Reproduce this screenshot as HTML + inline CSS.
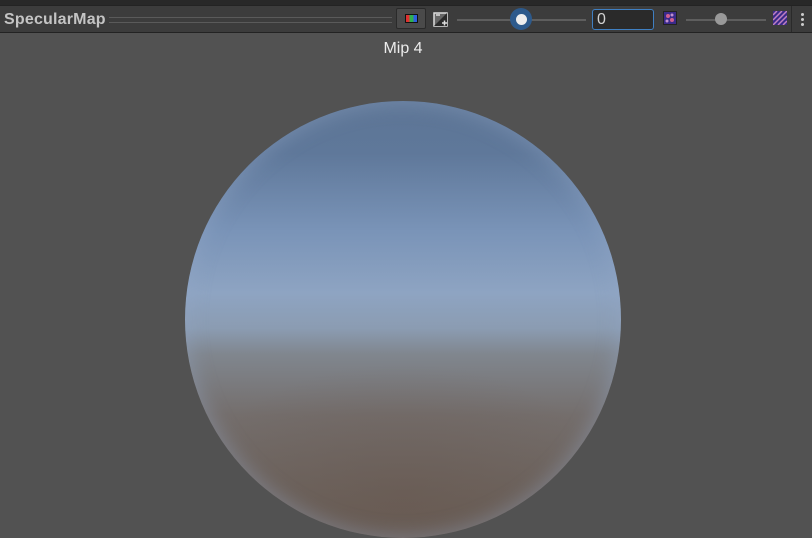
<!DOCTYPE html>
<html><head><style>
html,body{margin:0;padding:0;width:812px;height:538px;overflow:hidden;background:#525252;font-family:"Liberation Sans",sans-serif;}
.top{position:absolute;left:0;top:0;width:812px;height:5px;background:#282828;}
.bar{position:absolute;left:0;top:5px;width:812px;height:26px;background:#3c3c3c;border-top:1px solid #232323;border-bottom:1px solid #232323;}
.title{position:absolute;left:4px;top:5px;color:#c4c4c4;font-size:16px;font-weight:bold;letter-spacing:0.2px;}
.lines{position:absolute;left:109px;top:11px;width:283px;height:4px;border-top:1px solid #5a5a5a;border-bottom:1px solid #5a5a5a;}
.btn{position:absolute;left:396px;top:2px;width:28px;height:19px;background:#4a4a4a;border:1px solid #2a2a2a;border-radius:2px;}
.track{position:absolute;height:2px;background:#5e5e5e;}
.field{position:absolute;left:592px;top:3px;width:62px;height:21px;background:#2a2a2a;border:1px solid #3f7fc2;border-radius:3px;color:#d2d2d2;font-size:16px;line-height:20px;padding-left:4px;box-sizing:border-box;}
.mip{position:absolute;left:0;width:806px;top:40px;text-align:center;color:#ececec;font-size:16px;}
.sphere{position:absolute;left:185px;top:101px;width:436px;height:437px;border-radius:50%;
background:linear-gradient(#5d7595 0%,#5f789a 12%,#7a94b8 30%,#8ea4c2 44%,#8b9cb2 52%,#80868e 58%,#746e6c 72%,#695e56 100%);overflow:hidden;}
.sphere:before{content:"";position:absolute;inset:0;border-radius:50%;background:radial-gradient(ellipse 50% 30% at 50% 90%,rgba(100,80,70,.35),rgba(100,80,70,0));}
.sphere:after{content:"";position:absolute;inset:0;border-radius:50%;box-shadow:inset 0 0 18px 4px rgba(150,170,200,.35);}
</style></head><body>
<div class="top"></div>
<div class="bar">
<div class="title">SpecularMap</div>
<div class="lines"></div>
<div class="btn"><div style="position:absolute;left:8px;top:5px;width:11px;height:7px;border:1px solid #111;background:linear-gradient(90deg,#e03030 33%,#30b050 33% 66%,#3060e0 66%);"></div></div>
<svg style="position:absolute;left:433px;top:6px" width="16" height="16"><rect x="1" y="1" width="13" height="13" fill="#666" stroke="#ddd" stroke-width="1.5"/><path d="M1 14 L14 1 L14 14 Z" fill="#2a2a2a"/><path d="M3 3 L7 3" stroke="#ddd" stroke-width="1.5"/><path d="M9 11 h5 M11.5 8.5 v5" stroke="#ddd" stroke-width="1.5"/></svg>
<div class="track" style="left:457px;top:13px;width:129px"></div>
<div style="position:absolute;left:510px;top:2px;width:22px;height:22px;border-radius:50%;background:#2d5a8c;"></div>
<div style="position:absolute;left:516px;top:8px;width:11px;height:11px;border-radius:50%;background:#eee;"></div>
<div class="field">0</div>
<svg style="position:absolute;left:663px;top:5px" width="14" height="14"><rect width="14" height="14" fill="#222"/><rect x="1" y="1" width="12" height="12" fill="#3a2a8a"/><circle cx="5" cy="5" r="2" fill="#d06090"/><circle cx="9" cy="9" r="2" fill="#d06090"/><circle cx="9" cy="4" r="1.5" fill="#c090d0"/><circle cx="4" cy="10" r="1.5" fill="#c090d0"/></svg>
<div class="track" style="left:686px;top:13px;width:80px"></div>
<div style="position:absolute;left:715px;top:7px;width:12px;height:12px;border-radius:50%;background:#999;"></div>
<svg style="position:absolute;left:773px;top:5px" width="14" height="14"><rect width="14" height="14" fill="#3a2a8a"/><path d="M0 4 L4 0 M0 9 L9 0 M0 14 L14 0 M5 14 L14 5 M10 14 L14 10" stroke="#c080c0" stroke-width="1.5"/></svg>
<div style="position:absolute;left:791px;top:0;width:1px;height:26px;background:#2a2a2a;"></div>
<div style="position:absolute;left:801px;top:7px;width:3px;height:3px;background:#ccc;border-radius:50%;box-shadow:0 5px 0 #ccc,0 10px 0 #ccc;"></div>
</div>
<div class="mip">Mip 4</div>
<div class="sphere"></div>
</body></html>
